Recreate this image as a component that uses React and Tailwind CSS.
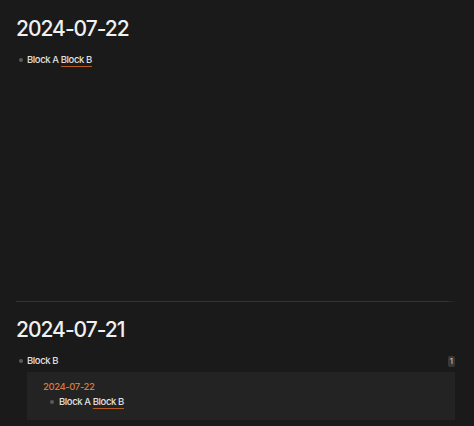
export default function App() {
  return (
    <div className="min-h-screen w-full bg-[#1a1a1a] text-[#e0e0e0] px-4 font-['Inter',sans-serif]">
      <section className="pt-[14px] h-[301px]">
        <h1 className="text-[21px] leading-[30px] font-medium tracking-[-1px] text-[#f0f0f0]">2024-07-22</h1>
        <div className="mt-[8px] flex items-center h-[16px]">
          <span className="w-[11px] flex justify-start pl-[3px]">
            <span className="block w-[4px] h-[4px] rounded-full bg-[#5a5a5a]"></span>
          </span>
          <span className="text-[9.5px] leading-[16px] font-medium tracking-[-0.4px]">
            Block A <span className="border-b border-[#b85a1f] pb-[1px]">Block B</span>
          </span>
        </div>
      </section>
      <div className="h-[1px] bg-gradient-to-r from-[#333333] via-[#333333] via-[97%] to-transparent"></div>
      <section className="pt-[13px]">
        <h1 className="text-[21px] leading-[30px] font-medium tracking-[-1px] text-[#f0f0f0]">2024-07-21</h1>
        <div className="mt-[8px] flex items-center h-[16px] pr-[3px]">
          <span className="w-[11px] flex justify-start pl-[3px]">
            <span className="block w-[4px] h-[4px] rounded-full bg-[#5a5a5a]"></span>
          </span>
          <span className="text-[9.5px] leading-[16px] font-medium tracking-[-0.4px] flex-1">Block B</span>
          <span className="text-[8px] leading-[11px] px-[2px] rounded-[2px] bg-[#383838] text-[#d0d0d0]">1</span>
        </div>
        <div className="ml-[11px] mr-[3px] mt-[3px] bg-[#232323] h-[48px] pt-[8px] pl-[16px]">
          <div className="text-[9.5px] leading-[14px] font-medium tracking-[-0.4px] text-[#d9773a]">2024-07-22</div>
          <div className="flex items-center h-[16px]">
            <span className="w-[16px] flex justify-start pl-[7px]">
              <span className="block w-[4px] h-[4px] rounded-full bg-[#5a5a5a]"></span>
            </span>
            <span className="text-[9.5px] leading-[16px] font-medium tracking-[-0.4px]">
              Block A <span className="border-b border-[#b85a1f] pb-[1px]">Block B</span>
            </span>
          </div>
        </div>
      </section>
    </div>
  );
}
